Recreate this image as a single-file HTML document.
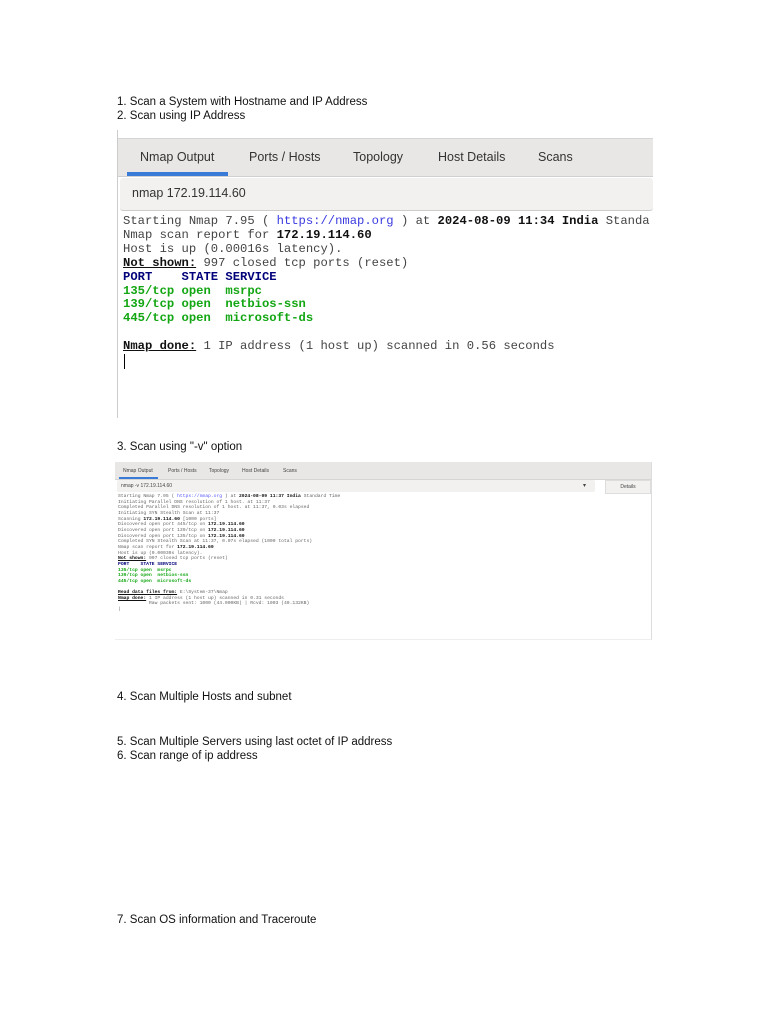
<!DOCTYPE html>
<html><head><style>
body{margin:0;width:768px;height:1024px;background:#fff;position:relative;overflow:hidden;font-family:"Liberation Sans",sans-serif;}
.t{position:absolute;left:117px;font-size:11.5px;color:#111;line-height:14px;white-space:nowrap}
.s1{position:absolute;left:117px;top:130px;width:535px;height:288px;background:#fff;border-left:1px solid #ccc;overflow:hidden}
.tabs{position:absolute;left:0;top:8px;width:535px;height:37px;background:#e9e7e5;border-top:1px solid #d5d5d5;border-bottom:1px solid #d0d0d0}
.tab{position:absolute;top:11px;font-size:12.5px;color:#333}
.cmd{position:absolute;left:2px;top:48px;width:533px;height:32px;background:#f2f1f0;border-bottom:1px solid #ccc;border-radius:3px}
.mono{position:absolute;left:5px;font-family:"Liberation Mono",monospace;font-size:12.2px;line-height:13.9px;color:#444;white-space:pre}
b{color:#111}
.bl{color:#00007a;font-weight:bold}.gr{color:#12a612;font-weight:bold}.u{text-decoration:underline;font-weight:bold;color:#111}
.s2{position:absolute;left:115px;top:462px;width:536px;height:177px;background:#fff;border-right:1px solid #ddd;border-bottom:1px solid #eee;overflow:hidden}
.mono2{position:absolute;left:3px;top:32px;font-family:"Liberation Mono",monospace;font-size:4.7px;line-height:5.65px;color:#666;white-space:pre}
</style></head><body>
<div class="t" style="top:95px">1. Scan a System with Hostname and IP Address</div>
<div class="t" style="top:109px">2. Scan using IP Address</div>
<div class="s1">
 <div class="tabs">
  <span class="tab" style="left:22px">Nmap Output</span>
  <span class="tab" style="left:131px">Ports / Hosts</span>
  <span class="tab" style="left:235px">Topology</span>
  <span class="tab" style="left:320px">Host Details</span>
  <span class="tab" style="left:420px">Scans</span>
  <div style="position:absolute;left:9px;top:33px;width:101px;height:4px;background:#3b7bd8"></div>
 </div>
 <div class="cmd"><span style="position:absolute;left:12px;top:8px;font-size:12.5px;color:#333">nmap 172.19.114.60</span></div>
 <div class="mono" style="top:85px">Starting Nmap 7.95 ( <span style="color:#3a3ae0">https://nmap.org</span> ) at <b>2024-08-09 11:34 India</b> Standa
Nmap scan report for <b>172.19.114.60</b>
Host is up (0.00016s latency).
<span class="u">Not shown:</span> 997 closed tcp ports (reset)
<span class="bl">PORT    STATE SERVICE</span>
<span class="gr">135/tcp open  msrpc</span>
<span class="gr">139/tcp open  netbios-ssn</span>
<span class="gr">445/tcp open  microsoft-ds</span>

<span class="u">Nmap done:</span> 1 IP address (1 host up) scanned in 0.56 seconds</div>
 <div style="position:absolute;left:6px;top:224px;width:1px;height:15px;background:#000"></div>
</div>
<div class="t" style="top:440px">3. Scan using "-v" option</div>
<div class="s2">
 <div style="position:absolute;left:0;top:0;width:536px;height:17px;background:#e9e7e5;border-bottom:1px solid #d5d5d5;font-size:5px;color:#444">
  <span style="position:absolute;left:8px;top:6px">Nmap Output</span><span style="position:absolute;left:53px;top:6px">Ports / Hosts</span><span style="position:absolute;left:94px;top:6px">Topology</span><span style="position:absolute;left:127px;top:6px">Host Details</span><span style="position:absolute;left:168px;top:6px">Scans</span>
  <div style="position:absolute;left:4px;top:15px;width:39px;height:2px;background:#3b7bd8"></div>
 </div>
 <div style="position:absolute;left:2px;top:18px;width:478px;height:12px;background:#f2f1f0;border-radius:2px;font-size:5px;color:#444"><span style="position:absolute;left:4px;top:3px">nmap -v 172.19.114.60</span><span style="position:absolute;left:466px;top:2px;font-size:6px">▾</span></div>
 <div style="position:absolute;left:490px;top:18px;width:44px;height:12px;background:#f2f1f0;border:1px solid #ddd;font-size:5px;color:#444;text-align:center;line-height:12px">Details</div>
 <div class="mono2">Starting Nmap 7.95 ( <span style="color:#55f">https://nmap.org</span> ) at <b>2024-08-09 11:37 India</b> Standard Time
Initiating Parallel DNS resolution of 1 host. at 11:37
Completed Parallel DNS resolution of 1 host. at 11:37, 0.03s elapsed
Initiating SYN Stealth Scan at 11:37
Scanning <b>172.19.114.60</b> [1000 ports]
Discovered open port 445/tcp on <b>172.19.114.60</b>
Discovered open port 139/tcp on <b>172.19.114.60</b>
Discovered open port 135/tcp on <b>172.19.114.60</b>
Completed SYN Stealth Scan at 11:37, 0.07s elapsed (1000 total ports)
Nmap scan report for <b>172.19.114.60</b>
Host is up (0.00030s latency).
<span class="u">Not shown:</span> 997 closed tcp ports (reset)
<span class="bl">PORT    STATE SERVICE</span>
<span class="gr">135/tcp open  msrpc</span>
<span class="gr">139/tcp open  netbios-ssn</span>
<span class="gr">445/tcp open  microsoft-ds</span>

<span class="u">Read data files from:</span> E:\System-37\Nmap
<span class="u">Nmap done:</span> 1 IP address (1 host up) scanned in 0.31 seconds
           Raw packets sent: 1000 (44.000KB) | Rcvd: 1003 (40.132KB)
|</div>
</div>
<div class="t" style="top:690px">4. Scan Multiple Hosts and subnet</div>
<div class="t" style="top:735px">5. Scan Multiple Servers using last octet of IP address</div>
<div class="t" style="top:749px">6. Scan range of ip address</div>
<div class="t" style="top:913px">7. Scan OS information and Traceroute</div>
</body></html>
